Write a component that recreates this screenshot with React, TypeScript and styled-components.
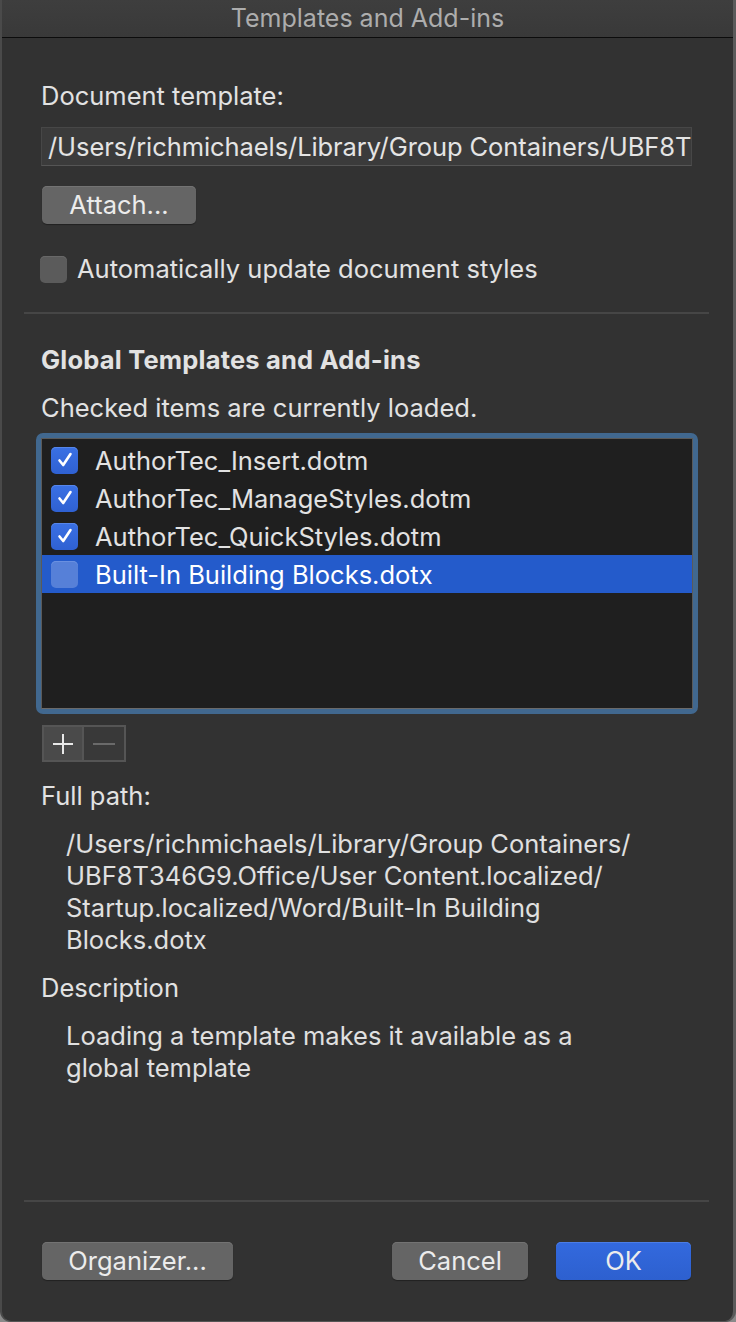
import React from 'react'
import styled, { createGlobalStyle } from 'styled-components'

const GlobalStyle = createGlobalStyle`
  html, body {
    margin: 0;
    padding: 0;
    background: #8a8a8a;
  }
  body {
    font-family: Inter, "Noto Sans", "Liberation Sans", sans-serif;
    -webkit-font-smoothing: antialiased;
  }
`

const Window = styled.div`
  width: 736px;
  height: 1322px;
  box-sizing: border-box;
  background: #323232;
  border-left: 2px solid #4a4a4a;
  border-right: 3px solid #5b5b5b;
  border-bottom: 1px solid #555;
  border-radius: 0 0 11px 11px;
  display: flex;
  flex-direction: column;
  overflow: hidden;
  color: #e2e2e2;
`

const TitleBar = styled.div`
  height: 36px;
  flex-shrink: 0;
  background: linear-gradient(#3e3e3e, #393939);
  border-bottom: 1px solid #0c0c0c;
  display: flex;
  align-items: center;
  justify-content: center;
  font-size: 25px;
  color: #adadad;
  padding-bottom: 1px;
`

const Section = styled.div`
  display: flex;
  flex-direction: column;
  align-items: flex-start;
  padding: 0 41px 0 39px;
`

const Label = styled.div<{ $top: number; $bold?: boolean }>`
  margin-top: ${(p) => p.$top}px;
  font-size: 25.5px;
  line-height: 30px;
  font-weight: ${(p) => (p.$bold ? 700 : 400)};
  letter-spacing: ${(p) => (p.$bold ? '0.2px' : '0')};
  color: #e2e2e2;
  white-space: nowrap;
`

const Field = styled.div`
  margin-top: 16px;
  align-self: stretch;
  height: 39px;
  box-sizing: border-box;
  background: #3b3b3b;
  border: 1px solid #474747;
  border-bottom-color: #555;
  padding: 0 0 0 6px;
  display: flex;
  align-items: center;
  font-size: 25.5px;
  letter-spacing: -0.08px;
  color: #e4e4e4;
  white-space: nowrap;
  overflow: hidden;
`

const Button = styled.div<{ $width: number; $primary?: boolean }>`
  width: ${(p) => p.$width}px;
  height: 38px;
  box-sizing: border-box;
  border-radius: 5px;
  background: ${(p) => (p.$primary ? 'linear-gradient(#3369de, #2d60cf)' : '#656565')};
  box-shadow: inset 0 1px 0 ${(p) => (p.$primary ? '#4b7de6' : '#737373')}, 0 1px 1px rgba(0, 0, 0, 0.35);
  display: flex;
  align-items: center;
  justify-content: center;
  font-size: 25.5px;
  color: #ececec;
  padding-bottom: 1px;
`

const AttachButton = styled(Button)`
  margin-top: 20px;
  margin-left: 1px;
`

const CheckRow = styled.div`
  margin-top: 31px;
  margin-left: -1px;
  height: 28px;
  line-height: 28px;
  display: flex;
  align-items: center;
  gap: 10px;
  font-size: 25.5px;
  color: #e2e2e2;
`

const Box = styled.div<{ $checked?: boolean; $onBlue?: boolean }>`
  width: 27px;
  height: 27px;
  box-sizing: border-box;
  border-radius: 5px;
  flex-shrink: 0;
  background: ${(p) => (p.$checked ? 'linear-gradient(#3a70e4, #2f61d2)' : p.$onBlue ? '#5680d8' : '#5b5b5b')};
  box-shadow: inset 0 1px 0 ${(p) => (p.$checked ? '#5686ea' : p.$onBlue ? '#6a90e0' : '#686868')};
  display: flex;
  align-items: center;
  justify-content: center;
`

const Separator = styled.div<{ $top: number }>`
  margin: ${(p) => p.$top}px 24px 0 22px;
  height: 2px;
  background: #464646;
  flex-shrink: 0;
`

const ListRing = styled.div`
  margin-top: 10px;
  margin-left: -5px;
  align-self: stretch;
  margin-right: -6px;
  height: 281px;
  box-sizing: border-box;
  border: 5px solid #41688f;
  border-radius: 7px;
  background: #1f1f1f;
  display: flex;
`

const ListInner = styled.div`
  flex: 1;
  border: 1px solid #5a5a5a;
  border-bottom-color: #6a6a6a;
  padding-top: 2px;
  display: flex;
  flex-direction: column;
`

const Row = styled.div<{ $selected?: boolean }>`
  height: 38px;
  display: flex;
  align-items: center;
  gap: 17px;
  padding-left: 9px;
  font-size: 25.5px;
  background: ${(p) => (p.$selected ? '#245bcb' : 'transparent')};
  color: ${(p) => (p.$selected ? '#ffffff' : '#e2e2e2')};
  white-space: nowrap;
`

const PlusMinus = styled.div`
  margin-top: 11px;
  margin-left: 1px;
  display: flex;
`

const SquareButton = styled.div<{ $enabled?: boolean }>`
  width: 42px;
  height: 37px;
  box-sizing: border-box;
  border: 2px solid #555;
  background: ${(p) => (p.$enabled ? '#4a4a4a' : '#393939')};
  display: flex;
  align-items: center;
  justify-content: center;
  & + & {
    border-left: none;
  }
`

const Detail = styled.div<{ $top: number }>`
  margin-top: ${(p) => p.$top}px;
  padding-left: 25px;
  font-size: 25.5px;
  line-height: 32px;
  color: #e0e0e0;
  white-space: nowrap;
`

const Spacer = styled.div`
  flex: 1;
`

const Footer = styled.div`
  margin-top: 40px;
  margin-bottom: 41px;
  padding: 0 42px 0 40px;
  display: flex;
  align-items: center;
`

const FooterRight = styled.div`
  margin-left: auto;
  display: flex;
  gap: 28px;
`

const Check = () => (
  <svg width="18" height="18" viewBox="0 0 18 18">
    <path d="M3.5 9.5 L7.2 14 L14.5 3" fill="none" stroke="#fff" strokeWidth="2.6" strokeLinecap="round" strokeLinejoin="round" />
  </svg>
)

const items = [
  { name: 'AuthorTec_Insert.dotm', checked: true },
  { name: 'AuthorTec_ManageStyles.dotm', checked: true },
  { name: 'AuthorTec_QuickStyles.dotm', checked: true },
  { name: 'Built-In Building Blocks.dotx', checked: false, selected: true },
]

const App = () => (
  <>
    <GlobalStyle />
    <Window>
      <TitleBar>Templates and Add-ins</TitleBar>
      <Section>
        <Label $top={43}>Document template:</Label>
        <Field>/Users/richmichaels/Library/Group Containers/UBF8T</Field>
        <AttachButton $width={154}>Attach...</AttachButton>
        <CheckRow>
          <Box />
          Automatically update document styles
        </CheckRow>
      </Section>
      <Separator $top={29} />
      <Section>
        <Label $top={31} $bold>Global Templates and Add-ins</Label>
        <Label $top={18}>Checked items are currently loaded.</Label>
        <ListRing>
          <ListInner>
            {items.map((it) => (
              <Row key={it.name} $selected={it.selected}>
                <Box $checked={it.checked} $onBlue={it.selected}>
                  {it.checked && <Check />}
                </Box>
                {it.name}
              </Row>
            ))}
          </ListInner>
        </ListRing>
        <PlusMinus>
          <SquareButton $enabled>
            <svg width="24" height="24" viewBox="0 0 24 24">
              <path d="M12 2 V22 M2 12 H22" stroke="#e8e8e8" strokeWidth="2" />
            </svg>
          </SquareButton>
          <SquareButton>
            <svg width="24" height="24" viewBox="0 0 24 24">
              <path d="M1 12 H23" stroke="#6a6a6a" strokeWidth="2" />
            </svg>
          </SquareButton>
        </PlusMinus>
        <Label $top={19}>Full path:</Label>
        <Detail $top={17}>
          /Users/richmichaels/Library/Group Containers/
          <br />
          UBF8T346G9.Office/User Content.localized/
          <br />
          Startup.localized/Word/Built-In Building
          <br />
          Blocks.dotx
        </Detail>
        <Label $top={17}>Description</Label>
        <Detail $top={17}>
          Loading a template makes it available as a
          <br />
          global template
        </Detail>
      </Section>
      <Spacer />
      <Separator $top={0} />
      <Footer>
        <Button $width={191}>Organizer...</Button>
        <FooterRight>
          <Button $width={136}>Cancel</Button>
          <Button $width={135} $primary>OK</Button>
        </FooterRight>
      </Footer>
    </Window>
  </>
)

export default App
